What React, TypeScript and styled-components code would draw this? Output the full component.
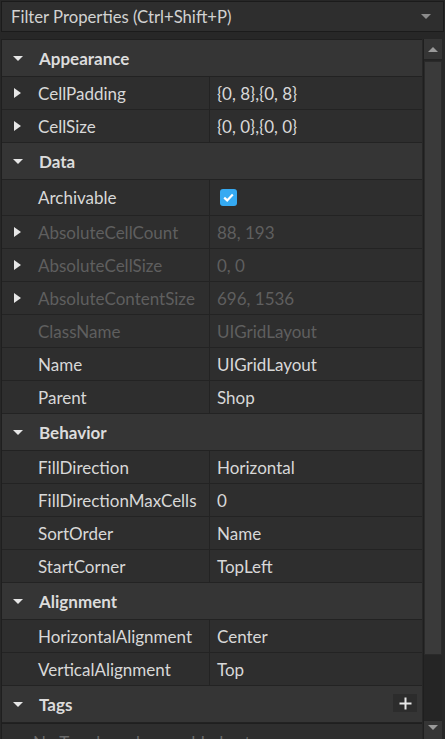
import React from "react";
import styled, { createGlobalStyle } from "styled-components";

const Global = createGlobalStyle`
  html, body {
    margin: 0;
    padding: 0;
    background: #272727;
    overflow: hidden;
  }
  body {
    font-family: "Lato", "Open Sans", "Liberation Sans", sans-serif;
    -webkit-font-smoothing: antialiased;
  }
`;

const Frame = styled.div`
  width: 445px;
  height: 739px;
  display: flex;
  flex-direction: column;
  overflow: hidden;
  background: #272727;
`;

const FilterBar = styled.div`
  margin: 1px 1px 0 1px;
  height: 29px;
  border: 1px solid #1b1b1b;
  background: #2e2e2e;
  display: flex;
  align-items: center;
  padding: 0 12px 0 9px;
  flex-shrink: 0;
`;

const FilterText = styled.span`
  flex: 1;
  color: #d2d2d2;
  font-size: 16.7px;
`;

const Caret = styled.span<{ $dir: "up" | "down"; $color?: string }>`
  width: 0;
  height: 0;
  border-left: 5px solid transparent;
  border-right: 5px solid transparent;
  ${(p) =>
    p.$dir === "down"
      ? `border-top: 5px solid ${p.$color ?? "#8c8c8c"};`
      : `border-bottom: 5px solid ${p.$color ?? "#8c8c8c"};`}
`;

const Gap = styled.div`
  height: 7px;
  flex-shrink: 0;
`;

const Panel = styled.div`
  flex: 1;
  display: flex;
  min-height: 0;
  padding-right: 3px;
`;

const List = styled.div`
  flex: 1;
  display: flex;
  flex-direction: column;
  border-left: 1px solid #1f1f1f;
  border-top: 1px solid #1f1f1f;
  background: #2e2e2e;
  overflow: hidden;
  margin-left: 1px;
`;

const Header = styled.div`
  height: 36px;
  flex-shrink: 0;
  display: flex;
  align-items: center;
  background: #353535;
  border-bottom: 1px solid #222222;
  padding-left: 11px;
  position: relative;
`;

const HeaderTitle = styled.span`
  margin-left: 16px;
  color: #dcdcdc;
  font-weight: 700;
  font-size: 17px;
`;

const Row = styled.div<{ $tall?: boolean }>`
  height: ${(p) => (p.$tall ? 35 : 32)}px;
  flex-shrink: 0;
  display: grid;
  grid-template-columns: 208px 1fr;
  border-bottom: 1px solid #232323;
  background: #2e2e2e;
`;

const NameCell = styled.div`
  display: flex;
  align-items: center;
  padding-left: 12px;
  border-right: 1px solid #232323;
`;

const Expander = styled.span<{ $show: boolean }>`
  width: 0;
  height: 0;
  border-top: 5px solid transparent;
  border-bottom: 5px solid transparent;
  border-left: 7px solid ${(p) => (p.$show ? "#e6e6e6" : "transparent")};
  margin-right: 17px;
`;

const Label = styled.span<{ $dim?: boolean }>`
  font-size: 17px;
  color: ${(p) => (p.$dim ? "#5f5f5f" : "#d8d8d8")};
  white-space: nowrap;
`;

const ValueCell = styled.div`
  display: flex;
  align-items: center;
  padding-left: 7px;
`;

const Check = styled.span`
  width: 17px;
  height: 17px;
  border-radius: 3px;
  background: #35aaf2;
  display: flex;
  align-items: center;
  justify-content: center;
  margin-left: 3px;
`;

const AddButton = styled.button`
  position: absolute;
  right: 5px;
  top: 8px;
  width: 24px;
  height: 18px;
  border: none;
  padding: 0;
  background: #2c2c2c;
  display: flex;
  align-items: center;
  justify-content: center;
`;

const TagsBody = styled.div`
  padding: 8px 0 0 31px;
  border-top: 1px solid #1f1f1f;
  color: #6a6a6a;
  font-size: 17px;
  white-space: nowrap;
`;

const Scrollbar = styled.div`
  width: 18px;
  margin-left: 1px;
  display: flex;
  flex-direction: column;
  background: #252525;
  border-left: 1px solid #1f1f1f;
`;

const ScrollButton = styled.div`
  height: 20px;
  flex-shrink: 0;
  display: flex;
  align-items: center;
  justify-content: center;
  background: #353535;
  border-bottom: 1px solid #232323;
`;

const Track = styled.div`
  flex: 1;
  display: flex;
  flex-direction: column;
  padding-top: 1px;
`;

const Thumb = styled.div`
  height: 592px;
  background: #3a3a3a;
  border: 1px solid #2a2a2a;
`;

const BottomButton = styled(ScrollButton)`
  border-bottom: none;
  border-top: 1px solid #232323;
  height: 14px;
  align-items: flex-start;
  padding-top: 4px;
`;

type Prop = {
  name: string;
  value?: string;
  expand?: boolean;
  dim?: boolean;
  check?: boolean;
};

type Section = { title: string; props: Prop[] };

const sections: Section[] = [
  {
    title: "Appearance",
    props: [
      { name: "CellPadding", value: "{0, 8},{0, 8}", expand: true },
      { name: "CellSize", value: "{0, 0},{0, 0}", expand: true },
    ],
  },
  {
    title: "Data",
    props: [
      { name: "Archivable", check: true },
      { name: "AbsoluteCellCount", value: "88, 193", expand: true, dim: true },
      { name: "AbsoluteCellSize", value: "0, 0", expand: true, dim: true },
      { name: "AbsoluteContentSize", value: "696, 1536", expand: true, dim: true },
      { name: "ClassName", value: "UIGridLayout", dim: true },
      { name: "Name", value: "UIGridLayout" },
      { name: "Parent", value: "Shop" },
    ],
  },
  {
    title: "Behavior",
    props: [
      { name: "FillDirection", value: "Horizontal" },
      { name: "FillDirectionMaxCells", value: "0" },
      { name: "SortOrder", value: "Name" },
      { name: "StartCorner", value: "TopLeft" },
    ],
  },
  {
    title: "Alignment",
    props: [
      { name: "HorizontalAlignment", value: "Center" },
      { name: "VerticalAlignment", value: "Top" },
    ],
  },
];

function CheckMark() {
  return (
    <svg width="11" height="9" viewBox="0 0 11 9">
      <path d="M1.2 4.6 L4.2 7.4 L9.8 1.6" fill="none" stroke="#ffffff" strokeWidth="2.2" />
    </svg>
  );
}

function PlusIcon() {
  return (
    <svg width="13" height="13" viewBox="0 0 13 13">
      <path d="M6.5 0.5 V12.5 M0.5 6.5 H12.5" stroke="#e8e8e8" strokeWidth="2" />
    </svg>
  );
}

function PropertyRow({ p }: { p: Prop }) {
  return (
    <Row $tall={p.check}>
      <NameCell>
        <Expander $show={!!p.expand} />
        <Label $dim={p.dim}>{p.name}</Label>
      </NameCell>
      <ValueCell>
        {p.check ? (
          <Check>
            <CheckMark />
          </Check>
        ) : (
          <Label $dim={p.dim}>{p.value}</Label>
        )}
      </ValueCell>
    </Row>
  );
}

export default function App() {
  return (
    <Frame>
      <Global />
      <FilterBar>
        <FilterText>Filter Properties (Ctrl+Shift+P)</FilterText>
        <Caret $dir="down" />
      </FilterBar>
      <Gap />
      <Panel>
        <List>
          {sections.map((s) => (
            <React.Fragment key={s.title}>
              <Header>
                <Caret $dir="down" $color="#e6e6e6" />
                <HeaderTitle>{s.title}</HeaderTitle>
              </Header>
              {s.props.map((p) => (
                <PropertyRow key={p.name} p={p} />
              ))}
            </React.Fragment>
          ))}
          <Header>
            <Caret $dir="down" $color="#e6e6e6" />
            <HeaderTitle>Tags</HeaderTitle>
            <AddButton>
              <PlusIcon />
            </AddButton>
          </Header>
          <TagsBody>No Tags have been added yet</TagsBody>
        </List>
        <Scrollbar>
          <ScrollButton>
            <Caret $dir="up" $color="#9a9a9a" />
          </ScrollButton>
          <Track>
            <Thumb />
          </Track>
          <BottomButton>
            <Caret $dir="down" $color="#9a9a9a" />
          </BottomButton>
        </Scrollbar>
      </Panel>
    </Frame>
  );
}
